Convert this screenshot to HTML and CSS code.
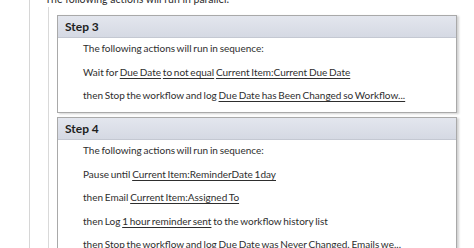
FILE: index.html
```html
<!DOCTYPE html>
<html>
<head>
<meta charset="utf-8">
<link rel="stylesheet" href="styles.css">
</head>
<body>
<div class="page">
  <div class="outer">
    <div class="parallel">The following actions will run in parallel:</div>
    <div class="branch">
      <div class="step">
        <div class="step-head">Step 3</div>
        <div class="step-body">
          <div class="line">The following actions will run in sequence:</div>
          <div class="line">Wait for <span class="lnk">Due Date</span> <span class="lnk">to not equal</span> <span class="lnk">Current Item:Current Due Date</span></div>
          <div class="line">then Stop the workflow and log <span class="lnk">Due Date has Been Changed so Workflow...</span></div>
        </div>
      </div>
      <div class="step">
        <div class="step-head">Step 4</div>
        <div class="step-body">
          <div class="line">The following actions will run in sequence:</div>
          <div class="line">Pause until <span class="lnk">Current Item:ReminderDate 1day</span></div>
          <div class="line">then Email <span class="lnk">Current Item:Assigned To</span></div>
          <div class="line">then Log <span class="lnk">1 hour reminder sent</span> to the workflow history list</div>
          <div class="line">then Stop the workflow and log <span class="lnk">Due Date was Never Changed. Emails we...</span></div>
        </div>
      </div>
    </div>
  </div>
</div>
</body>
</html>
```

FILE: styles.css
```css
html, body {
  margin: 0;
  padding: 0;
  background: #ffffff;
  overflow: hidden;
}
body {
  width: 474px;
  height: 248px;
  font-family: Lato, "Open Sans", sans-serif;
  font-size: 10px;
  color: #2e2e2e;
}
.page {
  padding-left: 29px;
  padding-right: 8px;
}
.outer {
  border-left: 1px solid #d6d6d6;
  margin-top: -9px;
}
.parallel {
  padding-left: 15px;
  line-height: 16px;
  height: 16px;
  font-size: 10.5px;
}
.branch {
  margin-left: 18px;
  border-left: 1px solid #d9d9d9;
  padding-left: 8px;
  padding-top: 8px;
  display: flex;
  flex-direction: column;
  gap: 4px;
}
.step {
  width: 398px;
  border: 1px solid #a9a9a9;
  background: #ffffff;
  box-shadow: 2px 1px 2px rgba(0, 0, 0, 0.18);
}
.step-head {
  height: 21px;
  line-height: 21px;
  padding-left: 7px;
  font-weight: bold;
  font-size: 12px;
  color: #1e1e1e;
  background: linear-gradient(#e3e6ee, #d5d9e3);
  border-bottom: 1px solid #c4c8d2;
}
.step-body {
  padding: 2px 0 9px 25px;
  display: flex;
  flex-direction: column;
  gap: 7.5px;
}
.line {
  line-height: 16px;
  height: 16px;
  white-space: nowrap;
  word-spacing: -0.8px;
}
.lnk {
  text-decoration: underline;
  text-underline-offset: 2px;
}
```
